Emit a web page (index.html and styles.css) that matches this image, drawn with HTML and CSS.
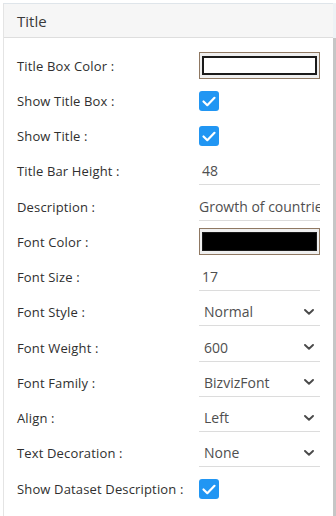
FILE: index.html
```html
<!DOCTYPE html>
<html>
<head>
<meta charset="utf-8">
<link rel="stylesheet" href="styles.css">
</head>
<body>
<div class="frame">
  <div class="panel">
    <div class="header">Title</div>
    <div class="body">
      <div class="row"><div class="label">Title Box Color :</div><div class="ctrl"><div class="color"><div class="swatch white"></div></div></div></div>
      <div class="row"><div class="label">Show Title Box :</div><div class="ctrl"><span class="check"><svg viewBox="0 0 20 20" width="20" height="20"><path d="M4.5 10.5 L8.3 14.2 L15.5 6.8" fill="none" stroke="#fff" stroke-width="2.2" stroke-linecap="round" stroke-linejoin="round"/></svg></span></div></div>
      <div class="row"><div class="label">Show Title :</div><div class="ctrl"><span class="check"><svg viewBox="0 0 20 20" width="20" height="20"><path d="M4.5 10.5 L8.3 14.2 L15.5 6.8" fill="none" stroke="#fff" stroke-width="2.2" stroke-linecap="round" stroke-linejoin="round"/></svg></span></div></div>
      <div class="row"><div class="label">Title Bar Height :</div><div class="ctrl"><div class="input num">48</div></div></div>
      <div class="row"><div class="label">Description :</div><div class="ctrl"><div class="input text">Growth of countries</div></div></div>
      <div class="row"><div class="label">Font Color :</div><div class="ctrl"><div class="color"><div class="swatch black"></div></div></div></div>
      <div class="row"><div class="label">Font Size :</div><div class="ctrl"><div class="input num">17</div></div></div>
      <div class="row"><div class="label">Font Style :</div><div class="ctrl"><div class="input select"><span>Normal</span><svg class="chev" viewBox="0 0 10 6" width="10" height="6"><path d="M1 1 L5 4.8 L9 1" fill="none" stroke="#4a4a4a" stroke-width="1.9" stroke-linecap="round" stroke-linejoin="round"/></svg></div></div></div>
      <div class="row"><div class="label">Font Weight :</div><div class="ctrl"><div class="input select"><span>600</span><svg class="chev" viewBox="0 0 10 6" width="10" height="6"><path d="M1 1 L5 4.8 L9 1" fill="none" stroke="#4a4a4a" stroke-width="1.9" stroke-linecap="round" stroke-linejoin="round"/></svg></div></div></div>
      <div class="row"><div class="label">Font Family :</div><div class="ctrl"><div class="input select"><span>BizvizFont</span><svg class="chev" viewBox="0 0 10 6" width="10" height="6"><path d="M1 1 L5 4.8 L9 1" fill="none" stroke="#4a4a4a" stroke-width="1.9" stroke-linecap="round" stroke-linejoin="round"/></svg></div></div></div>
      <div class="row"><div class="label">Align :</div><div class="ctrl"><div class="input select"><span>Left</span><svg class="chev" viewBox="0 0 10 6" width="10" height="6"><path d="M1 1 L5 4.8 L9 1" fill="none" stroke="#4a4a4a" stroke-width="1.9" stroke-linecap="round" stroke-linejoin="round"/></svg></div></div></div>
      <div class="row"><div class="label">Text Decoration :</div><div class="ctrl"><div class="input select"><span>None</span><svg class="chev" viewBox="0 0 10 6" width="10" height="6"><path d="M1 1 L5 4.8 L9 1" fill="none" stroke="#4a4a4a" stroke-width="1.9" stroke-linecap="round" stroke-linejoin="round"/></svg></div></div></div>
      <div class="row"><div class="label">Show Dataset Description :</div><div class="ctrl"><span class="check"><svg viewBox="0 0 20 20" width="20" height="20"><path d="M4.5 10.5 L8.3 14.2 L15.5 6.8" fill="none" stroke="#fff" stroke-width="2.2" stroke-linecap="round" stroke-linejoin="round"/></svg></span></div></div>
    </div>
  </div>
  <div class="scrollbar">
    <div class="track-top"></div>
    <div class="thumb"></div>
  </div>
</div>
</body>
</html>
```

FILE: styles.css
```css
* { box-sizing: border-box; }
html, body {
  margin: 0;
  padding: 0;
  background: #ffffff;
  width: 336px;
  height: 516px;
  overflow: hidden;
  font-family: "Open Sans", "Noto Sans", sans-serif;
}
.frame {
  display: flex;
  height: 516px;
  padding-top: 3px;
  padding-left: 3px;
}
.panel {
  flex: 1;
  border-top: 1px solid #dfe5ea;
  border-left: 1px solid #e4e4e4;
  display: flex;
  flex-direction: column;
}
.header {
  height: 34px;
  background: #f6f6f6;
  border-bottom: 1px solid #dedede;
  padding-left: 13px;
  font-size: 15px;
  color: #3a3a3a;
  display: flex;
  align-items: center;
  padding-top: 1px;
}
.body {
  padding-top: 10px;
  display: flex;
  flex-direction: column;
}
.row {
  height: 35.25px;
  display: flex;
  align-items: center;
  padding-left: 13px;
}
.label {
  width: 182px;
  font-size: 13px;
  letter-spacing: 0.15px;
  color: #2f2f2f;
  white-space: nowrap;
}
.ctrl {
  width: 121px;
  display: flex;
  align-items: center;
}
.color {
  width: 121px;
  height: 27px;
  border: 1px solid #8f7862;
  background: #efefef;
  padding: 3px 2px;
}
.swatch {
  width: 100%;
  height: 100%;
  border: 1px solid #1a1a1a;
}
.swatch.white { background: #ffffff; outline: 1px solid #1a1a1a; outline-offset: -2px; }
.swatch.black { background: #000000; }
.check {
  width: 20px;
  height: 20px;
  border-radius: 3px;
  background: #2196f3;
  display: block;
}
.check svg { display: block; }
.input {
  width: 121px;
  height: 28px;
  border-bottom: 1px solid #dcdcdc;
  font-size: 14px;
  color: #4f4f4f;
  display: flex;
  align-items: center;
  white-space: nowrap;
  overflow: hidden;
}
.input.num { padding-left: 3px; }
.input.text { padding-left: 0; }
.input.select { padding-left: 5px; justify-content: space-between; padding-right: 6px; }
.chev { display: block; }
.scrollbar {
  width: 3px;
  display: flex;
  flex-direction: column;
}
.track-top {
  height: 35px;
  background: #eef2f5;
}
.thumb {
  flex: 1;
  background: #c6c6c6;
}
```
